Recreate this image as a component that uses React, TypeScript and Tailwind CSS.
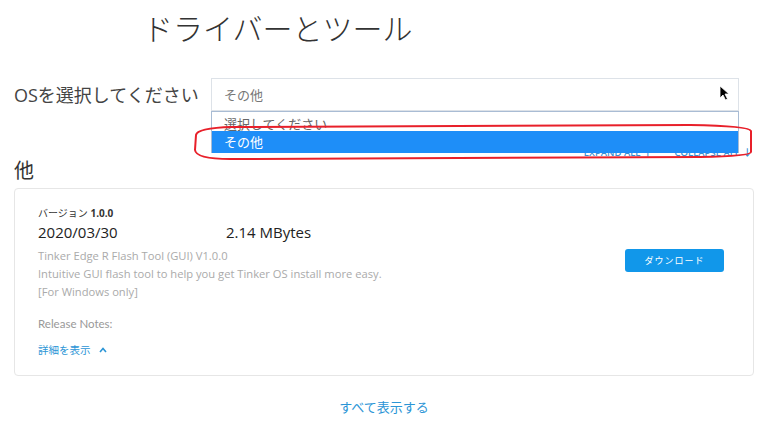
import React from "react";

function Cursor() {
  return (
    <svg width="11" height="16" viewBox="0 0 11 16" className="absolute right-[9px] top-[7px]">
      <path d="M1 1 L1 13 L4 10 L6.5 15 L8.5 14 L6 9 L10 9 Z" fill="#000" stroke="#fff" strokeWidth="0.8" strokeLinejoin="round" />
    </svg>
  );
}

export default function App() {
  return (
    <div className="relative w-[768px] h-[435px] overflow-hidden bg-white font-['Open_Sans','Noto_Sans_CJK_JP',sans-serif] text-[#333]">
      <h1 className="pl-[143px] pt-[9px] text-[30px] leading-[36px] font-light text-[#333] font-['Noto_Sans_CJK_JP',sans-serif]">
        ドライバーとツール
      </h1>

      <div className="mt-[33px] flex items-center pl-[14px] pr-[29px]">
        <div className="w-[197px] text-[18px] leading-[24px] text-[#444]">OSを選択してください</div>
        <div className="relative flex-1">
          <div className="h-[33px] border border-[#dde2e8] flex items-center pl-[12px] text-[13px] text-[#777] font-['Noto_Sans_CJK_JP',sans-serif]">
            その他
          </div>
          <Cursor />
          <div className="absolute left-0 right-0 top-full z-10 bg-white border-x border-t border-[#a9bcd4] font-['Noto_Sans_CJK_JP',sans-serif]">
            <div className="h-[19px] overflow-hidden pl-[12px] text-[13px] leading-[24px] text-[#666]">選択してください</div>
            <div className="h-[22px] bg-[#1e8ef8] pl-[12px] text-[13px] leading-[22px] text-white">その他</div>
          </div>
        </div>
      </div>

      <div className="mt-[36px] flex justify-end gap-[22px] pr-[16px] text-[9.5px] leading-[11px] font-semibold uppercase text-[#3a8fd0]">
        <span>Expand All ↑</span>
        <span>Collapse All ↓</span>
      </div>

      <div className="pl-[14px] text-[20px] leading-[24px] text-[#333] font-['Noto_Sans_CJK_JP',sans-serif]">他</div>

      <div className="mx-[14px] mt-[6px] flex rounded-[4px] border border-[#e6e6e6] pl-[23px] pr-[29px] pt-[17px] pb-[17px]">
        <div className="flex-1">
          <div className="text-[10px] leading-[14px] text-[#333]">
            <span className="font-['Noto_Sans_CJK_JP',sans-serif]">バージョン</span> <span className="font-bold">1.0.0</span>
          </div>
          <div className="mt-[2px] flex text-[15px] leading-[20px] text-[#222]">
            <span className="w-[188px]">2020/03/30</span>
            <span className="font-medium">2.14 MBytes</span>
          </div>
          <div className="mt-[5px] text-[11.2px] leading-[18px] text-[#aaa]">
            <div>Tinker Edge R Flash Tool (GUI) V1.0.0</div>
            <div>Intuitive GUI flash tool to help you get Tinker OS install more easy.</div>
            <div>[For Windows only]</div>
          </div>
          <div className="mt-[15px] text-[11.5px] leading-[16px] text-[#999] font-['Lato',sans-serif]">Release Notes:</div>
          <div className="mt-[10px] flex items-center gap-[8px] text-[10.5px] leading-[16px] text-[#2b95d6] font-['Noto_Sans_CJK_JP',sans-serif]">
            <span>詳細を表示</span>
            <svg width="8" height="6" viewBox="0 0 8 6">
              <polyline points="1,5 4,1.5 7,5" fill="none" stroke="#2b95d6" strokeWidth="1.6" />
            </svg>
          </div>
        </div>
        <div className="pt-[40px]">
          <button className="h-[23px] w-[99px] rounded-[3px] bg-[#1197ea] text-[9px] tracking-[1px] text-white font-['Noto_Sans_CJK_JP',sans-serif]">
            ダウンロード
          </button>
        </div>
      </div>

      <div className="mt-[22px] text-center text-[13px] leading-[18px] text-[#2b95d6] font-['Noto_Sans_CJK_JP',sans-serif]">
        すべて表示する
      </div>

      <svg className="pointer-events-none absolute inset-0 z-20" width="768" height="435" viewBox="0 0 768 435">
        <path
          d="M232 127 L690 125 Q750 126 751 131 L751 152 Q751 156 700 157 L230 159 Q196 159 195 150 L196 135 Q197 128 232 127 Z"
          fill="none"
          stroke="#e8202a"
          strokeWidth="2"
        />
      </svg>
    </div>
  );
}
